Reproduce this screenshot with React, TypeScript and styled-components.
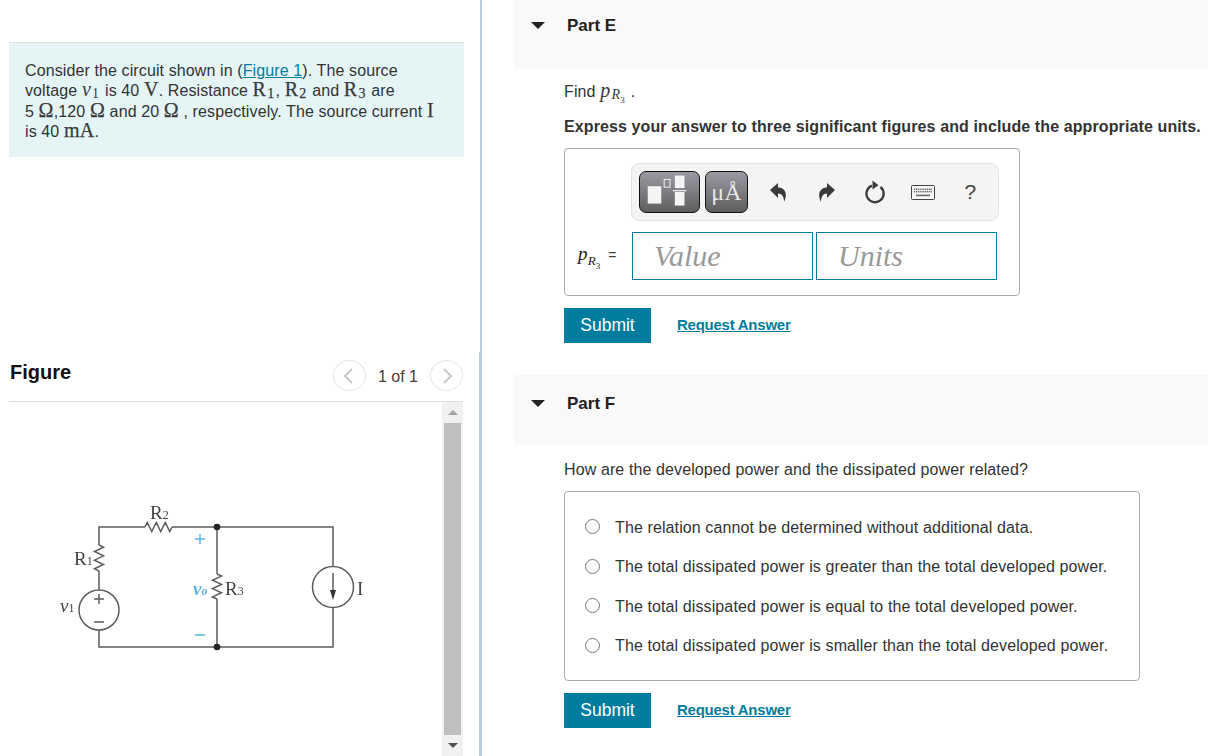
import styled, { createGlobalStyle } from "styled-components";

const GlobalStyle = createGlobalStyle`
  html, body {
    margin: 0;
    padding: 0;
    background: white;
  }
  * {
    box-sizing: border-box;
  }
`;

const Page = styled.div`
  display: flex;
  width: 1208px;
  height: 756px;
  overflow: hidden;
  font-family: "Liberation Sans", Arial, sans-serif;
  font-size: 16px;
  letter-spacing: 0.11px;
  color: #333;
`;

const LeftPane = styled.div`
  width: 479px;
  flex: none;
  padding: 42px 15px 0 9px;
  display: flex;
  flex-direction: column;
`;

const Divider = styled.div`
  width: 3px;
  flex: none;
  display: flex;
  flex-direction: column;
`;

const DividerTop = styled.div`
  height: 352px;
  margin-left: 1px;
  background: #b9cbdf;
`;

const DividerBottom = styled.div`
  flex: 1;
  background: #b9cbdf;
`;

const ProblemBox = styled.div`
  height: 115px;
  padding: 18px 16px 0;
  background: #e5f5f6;
  border-top: 1px solid #dfe3e3;
  line-height: 20.4px;
`;

const FigureLink = styled.a`
  color: #007c9e;
  text-decoration: underline;
`;

const Tex = styled.span`
  font-family: "Liberation Serif", "Times New Roman", serif;
  font-size: 20px;
  line-height: 0;
  color: #3a3a3a;
  letter-spacing: 0.3px;
  -webkit-text-stroke: 0.25px #3a3a3a;
`;

const TexItalic = styled(Tex)`
  font-style: italic;
  -webkit-text-stroke: 0;
`;

const TexSub = styled.sub`
  margin: 0 1px;
  font-size: 14px;
  line-height: 0;
  font-style: normal;
  vertical-align: -2px;
`;

const FigureHeader = styled.div`
  margin: 195px 1px 0 0;
  height: 50px;
  display: flex;
  align-items: flex-start;
  justify-content: space-between;
  border-bottom: 1px solid #dedede;
`;

const FigureTitle = styled.h2`
  margin: 8px 0 0 1px;
  font-size: 20px;
  line-height: 24px;
  font-weight: bold;
  letter-spacing: 0;
  color: #111;
`;

const Pager = styled.div`
  display: flex;
  align-items: flex-start;
  gap: 12px;
  margin-top: 8px;
  line-height: 34px;
  letter-spacing: 0;
  color: #4a3a3a;
`;

const PagerButton = styled.div`
  width: 33px;
  height: 31px;
  border: 1px solid #e6e6e6;
  border-radius: 50%;
  display: flex;
  align-items: center;
  justify-content: center;
`;

const FigureBody = styled.div`
  flex: 1;
  display: flex;
  margin-right: 1px;
  min-height: 0;
`;

const FigureCanvas = styled.div`
  flex: 1;
  padding: 88px 0 0 41px;
`;

const CircuitSvg = styled.svg`
  display: block;
  filter: blur(0.35px);
`;

const Scrollbar = styled.div`
  width: 21px;
  flex: none;
  background: #f1f1f1;
  display: flex;
  flex-direction: column;
  align-items: center;
  padding: 0 2px;
`;

const ScrollCap = styled.div`
  height: 21px;
  flex: none;
  display: flex;
  align-items: center;
  justify-content: center;
`;

const ScrollArrow = styled.div<{ $down?: boolean }>`
  width: 0;
  height: 0;
  border-left: 5px solid transparent;
  border-right: 5px solid transparent;
  ${(p) =>
    p.$down
      ? "border-top: 5px solid #505050;"
      : "border-bottom: 5px solid #a3a3a3;"}
`;

const ScrollThumb = styled.div`
  flex: 1;
  width: 100%;
  background: #bfbfbf;
`;

const RightPane = styled.div`
  flex: 1;
  padding-left: 32px;
  min-width: 0;
`;

const PartHeader = styled.div<{ $h: number; $top: number }>`
  height: ${(p) => p.$h}px;
  padding: ${(p) => p.$top}px 0 0 17px;
  background: #f9f9f9;
  display: flex;
  align-items: flex-start;
  color: #222;
  font-size: 17px;
  font-weight: bold;
  letter-spacing: 0;
  line-height: 18px;
`;

const Caret = styled.span`
  width: 0;
  height: 0;
  margin: 5px 22px 0 0;
  border-left: 7px solid transparent;
  border-right: 7px solid transparent;
  border-top: 7px solid #222;
`;

const PartBody = styled.div`
  padding-left: 50px;
`;

const Prompt = styled.p<{ $top: number }>`
  margin: ${(p) => p.$top}px 0 0;
  line-height: 20px;
  white-space: nowrap;
`;

const Instruction = styled.p`
  margin: 15px 0 0;
  line-height: 20px;
  font-weight: bold;
  white-space: nowrap;
`;

const AnswerBox = styled.div`
  margin-top: 11px;
  width: 456px;
  height: 148px;
  padding: 14px 0 0;
  border: 1px solid #aaa;
  border-radius: 4px;
`;

const Toolbar = styled.div`
  margin-left: 66px;
  width: 368px;
  height: 58px;
  padding: 7px;
  display: flex;
  background: #f4f4f4;
  border: 1px solid #e2e2e2;
  border-radius: 8px;
`;

const ToolButton = styled.div<{ $w: number }>`
  width: ${(p) => p.$w}px;
  height: 42px;
  margin-right: 5px;
  flex: none;
  display: flex;
  align-items: center;
  justify-content: center;
  background: linear-gradient(#9b9aa3, #5e5e5e);
  border: 1px solid #111;
  border-radius: 7px;
  color: #e8e8e8;
  font-family: "Liberation Serif", serif;
  font-size: 24px;
`;

const IconSlot = styled.div`
  width: 47.9px;
  height: 42px;
  flex: none;
  display: flex;
  align-items: center;
  justify-content: center;
  color: #3a3a3a;
`;

const FirstSlotGap = styled.div`
  width: 2px;
  flex: none;
`;

const Question = styled.span`
  font-size: 21px;
  color: #444;
`;

const InputRow = styled.div`
  margin-top: 11px;
  display: flex;
  align-items: center;
`;

const InputLabel = styled.div`
  width: 67px;
  padding-left: 13px;
  white-space: nowrap;
  font-size: 14px;
  color: #444;
`;

const LabelTex = styled.span`
  font-family: "Liberation Serif", serif;
  font-style: italic;
  font-size: 19px;
  line-height: 0;
  color: #222;
  margin-right: 8px;
`;

const LabelSub = styled.sub`
  font-size: 13px;
  line-height: 0;
`;

const LabelSubSub = styled.sub`
  font-size: 9px;
  line-height: 0;
  font-style: normal;
`;

const Field = styled.input`
  width: 181px;
  height: 48px;
  margin-right: 3px;
  padding: 0 0 0 21px;
  border: 1px solid #007c9e;
  border-radius: 0;
  outline: none;
  font-family: "Liberation Serif", serif;
  font-style: italic;
  font-size: 30px;
  &::placeholder {
    color: #999;
    opacity: 1;
  }
`;

const ActionRow = styled.div<{ $top: number }>`
  margin-top: ${(p) => p.$top}px;
  display: flex;
  align-items: center;
  gap: 26px;
`;

const SubmitButton = styled.button`
  width: 87px;
  height: 35px;
  padding: 0;
  border: none;
  background: #007c9e;
  color: white;
  font-family: "Liberation Sans", Arial, sans-serif;
  font-size: 17.5px;
  letter-spacing: 0;
`;

const RequestLink = styled.a`
  margin-bottom: 3px;
  color: #007c9e;
  font-size: 15px;
  font-weight: bold;
  letter-spacing: -0.25px;
  text-decoration: underline;
`;

const ChoiceBox = styled.div`
  margin-top: 11px;
  width: 576px;
  height: 190px;
  padding: 16px 0 0 20px;
  border: 1px solid #aaa;
  border-radius: 4px;
`;

const Choice = styled.label`
  height: 39.5px;
  display: flex;
  align-items: center;
  gap: 15px;
  white-space: nowrap;
`;

const Radio = styled.input`
  appearance: none;
  width: 15px;
  height: 15px;
  margin: 0 0 2px;
  flex: none;
  background: white;
  border: 1.5px solid #767676;
  border-radius: 50%;
`;

const PartSpacer = styled.div`
  height: 32px;
`;

const choices = [
  "The relation cannot be determined without additional data.",
  "The total dissipated power is greater than the total developed power.",
  "The total dissipated power is equal to the total developed power.",
  "The total dissipated power is smaller than the total developed power.",
];

function Circuit() {
  const wire = "#5c5c5c";
  const zigV = (x: number, y: number, len: number) => {
    const step = len / 6;
    let d = `M${x} ${y}`;
    for (let i = 0; i < 6; i++) {
      d += ` L${x + (i % 2 === 0 ? 4.5 : -4.5)} ${y + step * (i + 0.5)}`;
    }
    return d + ` L${x} ${y + len}`;
  };
  const zigH = (x: number, y: number, len: number) => {
    const step = len / 6;
    let d = `M${x} ${y}`;
    for (let i = 0; i < 6; i++) {
      d += ` L${x + step * (i + 0.5)} ${y + (i % 2 === 0 ? -4.5 : 4.5)}`;
    }
    return d + ` L${x + len} ${y}`;
  };
  return (
    <CircuitSvg width="320" height="170" viewBox="0 0 320 170" fill="none">
      <g stroke={wire} strokeWidth="1.5">
        <path d="M49 55 V37 H95 M122 37 H283 V76 M283 118 V157 H49 V140 M49 100 V81 M167 37 V84 M167 109 V157" />
        <path d={zigH(95, 37, 27)} />
        <path d={zigV(49, 55, 26)} />
        <path d={zigV(167, 84, 25)} />
        <circle cx="49" cy="120" r="20" />
        <circle cx="283" cy="97" r="20.5" />
        <path d="M283 83 V104" />
        <path d="M49 104 V114 M44 109 H54 M44 132 H54" />
      </g>
      <path d="M280 100 L286 100 L283 110 Z" fill="#333" />
      <circle cx="167" cy="37" r="3.3" fill="#222" />
      <circle cx="167" cy="157" r="3.3" fill="#222" />
      <path d="M145 49 H155 M150 44 V54 M145 145 H155" stroke="#5ab4e6" strokeWidth="1.4" />
      <g fontFamily="'Liberation Serif', serif" fill="#444" fontSize="19" letterSpacing="0">
        <text x="100" y="29">R<tspan fontSize="12">2</tspan></text>
        <text x="24" y="75">R<tspan fontSize="12">1</tspan></text>
        <text x="175" y="105">R<tspan fontSize="12">3</tspan></text>
        <text x="10" y="122" fontStyle="italic">v<tspan fontSize="12" fontStyle="normal">1</tspan></text>
        <text x="307" y="105">I</text>
        <text x="143" y="105" fontStyle="italic" fill="#5ab4e6" fontWeight="bold">v<tspan fontSize="12">o</tspan></text>
      </g>
    </CircuitSvg>
  );
}

function Chevron({ flip }: { flip?: boolean }) {
  return (
    <svg width="12" height="18" viewBox="0 0 12 18" fill="none">
      <path
        d={flip ? "M3 2 L10 9 L3 16" : "M9 2 L2 9 L9 16"}
        stroke="#c8c8c8"
        strokeWidth="2"
      />
    </svg>
  );
}

function TemplatesIcon() {
  return (
    <svg width="61" height="42" viewBox="0 0 61 42">
      <g fill="#f4f4f4">
        <rect x="8" y="15" width="14" height="18" />
        <rect x="36" y="4" width="10" height="13" />
        <rect x="34" y="19" width="14" height="1.3" />
        <rect x="36" y="21" width="10" height="14" />
      </g>
      <rect x="25" y="8" width="6" height="8" fill="none" stroke="#f4f4f4" />
    </svg>
  );
}

function ArrowIcon({ flip }: { flip?: boolean }) {
  return (
    <svg width="17" height="19" viewBox="0 0 17 19">
      <path
        transform={flip ? "matrix(-1 0 0 1 17 0)" : undefined}
        d="M0 7 L8 0 V4.4 C14 4.4 18.5 9.5 14 19 C14 14 12 10.6 8 10.6 V15 Z"
        fill="#3a3a3a"
      />
    </svg>
  );
}

function ResetIcon() {
  return (
    <svg width="22" height="24" viewBox="0 0 22 24" fill="none">
      <path
        d="M8 5.6 A8.6 8.6 0 1 0 16.5 7"
        stroke="#3a3a3a"
        strokeWidth="2.3"
      />
      <path d="M8.5 0.5 L14.5 5.3 L8.5 9.5 Z" fill="#3a3a3a" />
    </svg>
  );
}

function KeyboardIcon() {
  const keys = [];
  for (let row = 0; row < 2; row++) {
    for (let i = 0; i < 10; i++) {
      keys.push(<rect key={`${row}-${i}`} x={3 + i * 1.85} y={3.5 + row * 2.4} width="1.2" height="1.5" />);
    }
  }
  return (
    <svg width="24" height="15" viewBox="0 0 24 15">
      <rect x="0.5" y="0.5" width="23" height="14" rx="1" fill="#f8f8f8" stroke="#444" />
      <g fill="#666">
        {keys}
        <rect x="5" y="9.6" width="14" height="1.6" />
      </g>
    </svg>
  );
}

export default function App() {
  return (
    <>
      <GlobalStyle />
      <Page>
        <LeftPane>
          <ProblemBox>
            Consider the circuit shown in (<FigureLink>Figure 1</FigureLink>). The source
            <br />
            voltage <TexItalic>v<TexSub>1</TexSub></TexItalic> is 40 <Tex>V</Tex>. Resistance{" "}
            <Tex>R<TexSub>1</TexSub></Tex>, <Tex>R<TexSub>2</TexSub></Tex> and <Tex>R<TexSub>3</TexSub></Tex> are
            <br />
            5 <Tex>Ω</Tex>,120 <Tex>Ω</Tex> and 20 <Tex>Ω</Tex> , respectively. The source current <Tex>I</Tex>
            <br />
            is 40 <Tex>mA</Tex>.
          </ProblemBox>
          <FigureHeader>
            <FigureTitle>Figure</FigureTitle>
            <Pager>
              <PagerButton>
                <Chevron />
              </PagerButton>
              <span>1 of 1</span>
              <PagerButton>
                <Chevron flip />
              </PagerButton>
            </Pager>
          </FigureHeader>
          <FigureBody>
            <FigureCanvas>
              <Circuit />
            </FigureCanvas>
            <Scrollbar>
              <ScrollCap>
                <ScrollArrow />
              </ScrollCap>
              <ScrollThumb />
              <ScrollCap>
                <ScrollArrow $down />
              </ScrollCap>
            </Scrollbar>
          </FigureBody>
        </LeftPane>
        <Divider>
          <DividerTop />
          <DividerBottom />
        </Divider>
        <RightPane>
          <PartHeader $h={69} $top={17}>
            <Caret />
            Part E
          </PartHeader>
          <PartBody>
            <Prompt $top={13}>
              Find <TexItalic>p<TexSub><i>R</i><LabelSubSub>3</LabelSubSub></TexSub></TexItalic> .
            </Prompt>
            <Instruction>
              Express your answer to three significant figures and include the appropriate units.
            </Instruction>
            <AnswerBox>
              <Toolbar>
                <ToolButton $w={61}>
                  <TemplatesIcon />
                </ToolButton>
                <ToolButton $w={43}>μÅ</ToolButton>
                <FirstSlotGap />
                <IconSlot>
                  <ArrowIcon />
                </IconSlot>
                <IconSlot>
                  <ArrowIcon flip />
                </IconSlot>
                <IconSlot>
                  <ResetIcon />
                </IconSlot>
                <IconSlot>
                  <KeyboardIcon />
                </IconSlot>
                <IconSlot>
                  <Question>?</Question>
                </IconSlot>
              </Toolbar>
              <InputRow>
                <InputLabel>
                  <LabelTex>
                    p<LabelSub>R<LabelSubSub>3</LabelSubSub></LabelSub>
                  </LabelTex>
                  =
                </InputLabel>
                <Field placeholder="Value" />
                <Field placeholder="Units" />
              </InputRow>
            </AnswerBox>
            <ActionRow $top={12}>
              <SubmitButton>Submit</SubmitButton>
              <RequestLink>Request Answer</RequestLink>
            </ActionRow>
          </PartBody>
          <PartSpacer />
          <PartHeader $h={70} $top={20}>
            <Caret />
            Part F
          </PartHeader>
          <PartBody>
            <Prompt $top={15}>How are the developed power and the dissipated power related?</Prompt>
            <ChoiceBox>
              {choices.map((c) => (
                <Choice key={c}>
                  <Radio type="radio" name="partF" />
                  {c}
                </Choice>
              ))}
            </ChoiceBox>
            <ActionRow $top={12}>
              <SubmitButton>Submit</SubmitButton>
              <RequestLink>Request Answer</RequestLink>
            </ActionRow>
          </PartBody>
        </RightPane>
      </Page>
    </>
  );
}
